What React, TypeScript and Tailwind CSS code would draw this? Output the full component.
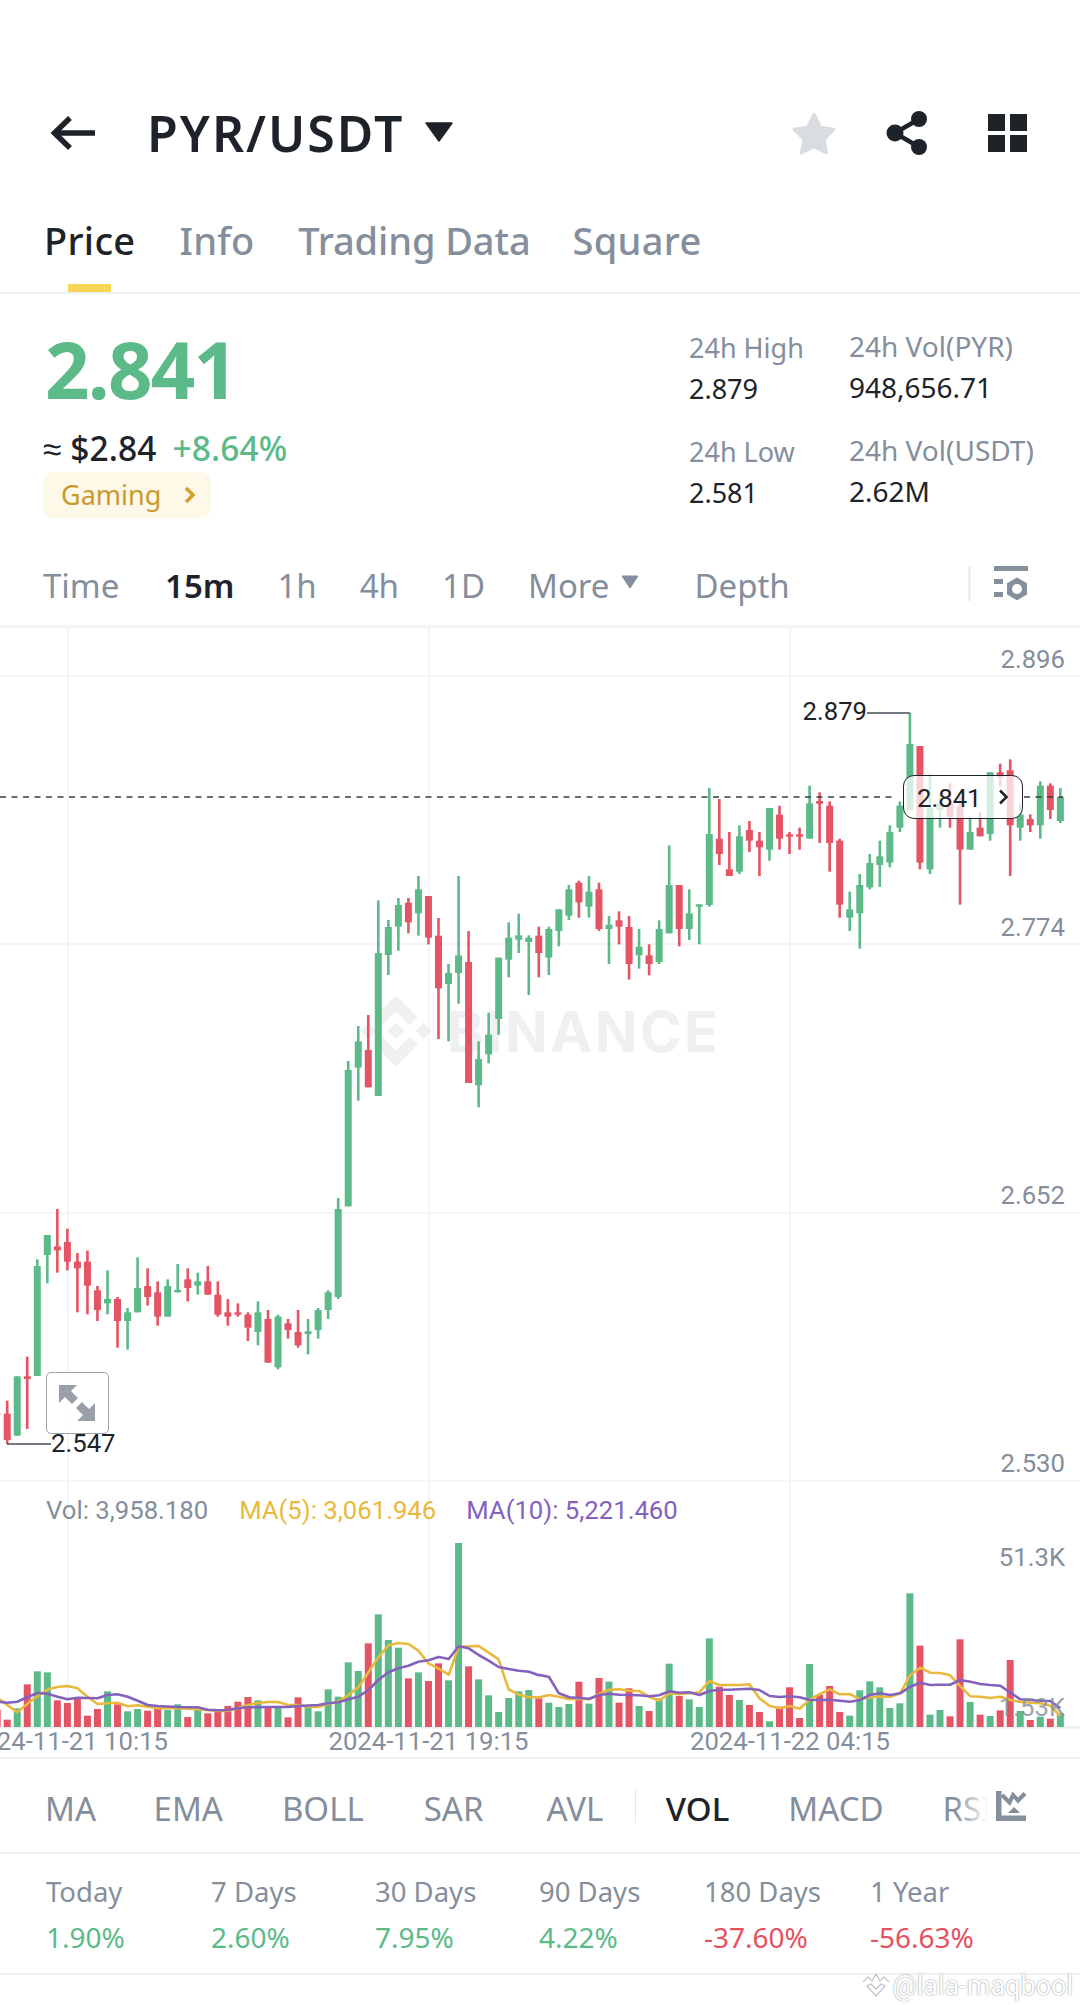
import React from "react";

type C = [string, number, number, number, number];
const A: C[] = [
  ["r",710,880,880,880],["r",842,881,960,972],["g",769,769,947,947],["r",710,769,777,927],["g",418,438,768,768],
  ["g",345,345,405,490],["r",267,379,391,458],["r",326,366,425,451],["r",399,425,445,577],["r",392,425,497,583],
  ["r",498,511,570,603],["g",451,537,550,583],["r",531,537,603,683],["g",564,577,603,689],["g",412,504,577,577],
  ["r",445,498,531,557],["r",484,517,590,617],["g",478,498,590,590],["g",432,510,517,517],["r",445,478,504,544],
  ["g",458,484,497,524],["r",438,484,524,524],["r",484,524,584,590],["r",537,577,590,617],["r",550,577,584,590],
  ["r",577,584,623,663],["g",544,577,636,676],["r",570,597,728,728],["g",584,590,742,748],["r",597,610,630,656],
  ["r",570,636,676,683],["g",597,634,642,703],["g",564,570,630,656],["g",511,517,570,597],["g",234,267,531,537],
];
const B: C[] = [
  ["g",1323,1350,1759,1759],["g",1218,1264,1343,1442],["r",1185,1290,1402,1402],["g",841,999,1428,1428],["g",900,921,1005,1065],
  ["g",834,855,920,992],["r",834,848,907,940],["g",768,808,880,947],["r",828,828,953,973],["r",894,947,1105,1257],
  ["g",1032,1059,1092,1264],["g",768,1006,1059,1151],["r",933,1026,1389,1389],["g",1264,1317,1396,1462],["g",1178,1244,1303,1330],
  ["g",1013,1013,1197,1244],["g",907,953,1019,1072],["g",881,946,959,999],["g",946,953,966,1125],["r",920,947,999,1072],
  ["g",920,927,1013,1065],["g",868,868,933,979],["g",795,808,887,900],["r",782,788,847,893],["g",768,815,860,893],
  ["r",788,808,927,933],["g",888,914,927,1032],["r",874,901,920,973],["r",888,921,1032,1079],["g",927,980,1006,1046],
  ["r",973,1006,1032,1066],["g",901,927,1026,1032],["g",676,795,940,940],["r",795,795,927,979],["g",808,880,927,960],
  ["g",853,853,860,973],["g",504,642,855,860],["r",537,656,702,735],["r",636,748,768,768],["g",616,649,755,762],
  ["r",603,630,662,696],["r",636,662,682,768],["g",564,564,689,722],["r",557,584,656,689],["r",636,643,650,702],
  ["r",623,643,650,689],["g",497,550,656,656],["r",517,543,551,669],["r",544,557,669,755],["r",656,662,854,893],
  ["g",815,868,893,933],["g",762,795,880,986],["g",702,729,802,808],["g",662,709,735,801],["g",616,636,728,742],
  ["g",544,557,623,636],["g",279,372,570,570],["r",378,378,728,748],["g",464,564,748,762],["g",523,550,570,623],
  ["r",490,550,590,623],["r",530,560,689,854],["g",590,636,689,689],["r",577,623,649,649],["g",457,457,642,662],
  ["r",431,457,472,500],["r",418,451,616,768],["g",550,584,623,662],["r",583,597,616,636],["g",484,497,616,656],
  ["r",490,497,570,597],["g",504,531,603,609],
];
const candles = [
  ...A.map((c) => [c[0], c[1] / 3 + 1120, c[2] / 3 + 1120, c[3] / 3 + 1120, c[4] / 3 + 1120] as C),
  ...B.map((c) => [c[0], c[1] / 3 + 620, c[2] / 3 + 620, c[3] / 3 + 620, c[4] / 3 + 620] as C),
];
const vols: [string, number][] = [
  ["r",629],["r",659],["g",625],["r",553],["g",514],["g",517],["r",601],["r",609],["r",593],["r",647],["r",627],["g",574],["r",613],["g",634],["g",627],["r",632],["r",627],["g",630],["g",613],["r",651],["g",628],["r",640],["r",632],["r",618],["r",605],["r",591],["g",601],["r",620],["g",620],["r",652],["r",592],["g",620],["g",634],["g",568],["g",590],
  ["g",487],["g",513],["r",430],["g",343],["g",420],["g",443],["r",535],["g",517],["r",543],["r",490],["g",541],["g",129],["r",499],["g",538],["g",586],["g",636],["g",594],["g",574],["g",570],["r",595],
  ["g",608],["g",621],["g",612],["r",545],["g",611],["r",534],["g",545],["r",608],["r",565],["g",618],["r",633],["g",595],["g",491],["r",588],["g",598],["g",621],["g",415],["r",560],["r",585],["g",600],["r",615],["r",636],["g",664],["r",620],["r",562],["r",654],["g",492],["r",585],["r",558],["r",636],["g",647],["g",571],["g",544],["g",562],["g",624],["g",610],["g",280],["r",437],["g",644],["g",630],["r",649],["r",418],["g",606],["r",644],["g",648],["r",631],["r",480],["g",633],["r",660],["g",650],["r",656],["g",640],
];
const ma5L = [[-3,597],[50,637],[85,607],[114,585],[140,568],[170,560],[196,558],[225,565],[254,590],[283,612],[312,610],[341,608],[371,619],[400,616],[458,625],[516,625],[574,628],[632,633],[661,633],[690,625],[720,615],[749,609],[778,606],[808,606],[837,615],[866,615],[895,620],[924,621],[953,612],[983,605],[1012,585],[1041,561],[1070,517],[1099,472],[1128,436],[1157,429],[1186,432],[1215,452],[1244,490],[1274,506],[1303,524],[1332,440],[1361,439],[1390,438],[1419,458],[1448,478],[1477,568],[1507,584],[1536,592],[1565,592]];
const ma5R = [[0,592],[26,585],[55,590],[85,598],[114,596],[143,598],[172,582],[201,569],[230,568],[259,572],[288,573],[317,590],[346,602],[376,580],[405,583],[434,580],[463,577],[492,543],[521,555],[550,555],[579,555],[608,553],[637,595],[667,618],[696,625],[725,618],[754,626],[784,598],[813,582],[842,568],[871,583],[900,582],[929,598],[958,592],[987,590],[1017,590],[1046,580],[1075,525],[1104,503],[1133,518],[1162,519],[1191,526],[1220,558],[1250,589],[1279,590],[1308,594],[1337,590],[1366,600],[1395,606],[1424,608],[1453,610],[1482,617],[1511,648]];
const ma10L = [[-3,605],[21,608],[50,605],[79,592],[109,579],[138,581],[167,590],[196,598],[225,593],[254,594],[283,595],[312,585],[341,583],[371,590],[400,602],[429,615],[458,618],[516,621],[574,622],[603,629],[632,631],[661,630],[690,625],[720,622],[778,621],[837,621],[866,618],[924,615],[953,610],[983,607],[1012,598],[1041,590],[1070,570],[1099,540],[1128,517],[1157,505],[1186,497],[1215,485],[1244,481],[1274,471],[1303,477],[1332,439],[1361,445],[1390,465],[1419,482],[1448,501],[1477,507],[1507,512],[1536,515],[1565,526]];
const ma10R = [[0,525],[26,531],[55,580],[85,592],[114,594],[143,596],[172,585],[201,581],[230,584],[259,585],[288,586],[317,589],[346,586],[376,574],[405,578],[434,577],[463,585],[492,573],[521,569],[550,569],[579,568],[608,566],[637,570],[667,588],[696,591],[725,589],[754,592],[784,600],[813,600],[842,599],[871,602],[900,605],[929,600],[958,585],[987,580],[1017,585],[1046,580],[1075,560],[1104,548],[1133,555],[1162,554],[1191,554],[1220,540],[1250,545],[1279,552],[1308,555],[1337,557],[1366,578],[1395,598],[1424,600],[1453,602],[1482,603],[1511,625]];
const line = (l: number[][], r: number[][]) =>
  [...l.map(([x, y]) => `${(x / 2.904).toFixed(1)},${(1500 + y / 3).toFixed(1)}`),
   ...r.map(([x, y]) => `${(540 + x / 2.904).toFixed(1)},${(1500 + y / 3).toFixed(1)}`)].join(" ");

const GREEN = "#5cba89";
const RED = "#e45464";
const cx = (k: number) => 7.2 + 10.03 * (k - 1);

function ChartDrawing() {
  return (
    <svg className="absolute left-0 top-0" width="1080" height="1132" viewBox="0 625 1080 1132">
      <g stroke="#f1f2f4" strokeWidth="1.5">
        {[676, 944, 1213, 1481].map((y) => <line key={y} x1="0" x2="1080" y1={y} y2={y} />)}
        {[68, 429, 790].map((x) => <line key={x} x1={x} x2={x} y1="627" y2="1727" />)}
      </g>
      <path
        transform="translate(360.5 995.5) scale(0.56)"
        fill="#eff1f1"
        d="M38.73 53.2l24.59-24.58 24.6 24.6 14.3-14.31L63.32 0 24.42 38.9l14.31 14.3zM0 63.31L14.3 49l14.31 14.31-14.31 14.3zM38.73 73.41l24.59 24.59 24.6-24.6 14.31 14.29-38.9 38.91-38.91-38.88-.02-.02zM98.28 63.31l14.3-14.3 14.31 14.3-14.31 14.31zM77.83 63.3L63.32 48.78 52.59 59.51l-1.24 1.23-2.54 2.54 14.51 14.5L77.83 63.3z"
      />
      <text x="447" y="1052" fill="#eff1f1" fontFamily="Inter, sans-serif" fontWeight="700" fontSize="56" textLength="271" lengthAdjust="spacing">BINANCE</text>
      {candles.map((c, k) => (
        <g key={k} fill={c[0] === "g" ? GREEN : RED}>
          <rect x={cx(k) - 1.3} y={c[1]} width="2.6" height={Math.max(c[4] - c[1], 0)} />
          <rect x={cx(k) - 3.5} y={c[2]} width="7" height={Math.max(c[3] - c[2], 1)} />
        </g>
      ))}
      <line x1="0" x2="892" y1="797" y2="797" stroke="#373c45" strokeWidth="1.5" strokeDasharray="6 5.5" />
      <line x1="1024" x2="1063" y1="797" y2="797" stroke="#373c45" strokeWidth="1.5" strokeDasharray="6 5.5" />
      <polyline points="867,713 910,713" fill="none" stroke="#474d57" strokeWidth="1.5" />
      <polyline points="7,1444 51,1444" fill="none" stroke="#474d57" strokeWidth="1.5" />
      <line x1="0" x2="1080" y1="1727.5" y2="1727.5" stroke="#eaecef" strokeWidth="2" />
      {vols.map(([col, v], k) => (
        <rect key={k} x={cx(k) - 3.5} y={1500 + v / 3} width="7" height={1727 - (1500 + v / 3)} fill={col === "g" ? GREEN : RED} />
      ))}
      <polyline points={line(ma5L, ma5R)} fill="none" stroke="#e9b93e" strokeWidth="2.6" strokeLinejoin="round" />
      <polyline points={line(ma10L, ma10R)} fill="none" stroke="#8561be" strokeWidth="2.6" strokeLinejoin="round" />
    </svg>
  );
}

function PriceLabel({ top, children, extra = "" }: { top: string; children: React.ReactNode; extra?: string }) {
  return <div className={`absolute right-[15px] font-['Roboto',sans-serif] text-[25.7px] leading-[30px] text-[#848e9c] ${top} ${extra}`}>{children}</div>;
}

function Stat({ label, value, red }: { label: string; value: string; red?: boolean }) {
  return (
    <div className="flex flex-col">
      <span className="text-[27.5px] leading-[36px] text-[#848e9c]">{label}</span>
      <span className={`mt-[9px] text-[28px] leading-[36px] ${red ? "text-[#e65160]" : "text-[#5cba89]"}`}>{value}</span>
    </div>
  );
}

function MiniStat({ label, value, width, size }: { label: string; value: string; width: string; size: string }) {
  return (
    <div className={`flex flex-col ${width}`}>
      <span className={`leading-[36px] text-[#848e9c] whitespace-nowrap ${size}`}>{label}</span>
      <span className={`mt-[5px] leading-[36px] text-[#1e2329] whitespace-nowrap ${size}`}>{value}</span>
    </div>
  );
}

export default function App() {
  return (
    <div className="w-[1080px] h-[2005px] overflow-hidden bg-white font-['Noto_Sans',sans-serif] text-[#1e2329]">
      <div className="h-[88px]" />
      {/* header */}
      <div className="h-[90px] flex items-center pl-[51px] pr-[52px]">
        <svg width="44" height="34" viewBox="0 0 44 34" fill="none" stroke="#1e2329" strokeWidth="5.5">
          <path d="M44 17H4" />
          <path d="M19 2L3.5 17 19 32" />
        </svg>
        <span className="ml-[52px] text-[50px] leading-[60px] font-semibold tracking-[2px]">PYR/USDT</span>
        <svg className="ml-[21px] -mt-[3px]" width="28" height="20" viewBox="0 0 28 20">
          <path d="M1 1h26L14 19z" fill="#1e2329" stroke="#1e2329" strokeWidth="1.5" strokeLinejoin="round" />
        </svg>
        <div className="flex-1" />
        <svg className="-ml-[1px]" width="46" height="46" viewBox="0 0 44 44">
          <polygon points="22,4 28,16.5 41,18.5 31.5,28 34,41 22,35 10,41 12.5,28 3,18.5 16,16.5" fill="#d9dce1" stroke="#d9dce1" strokeWidth="3" strokeLinejoin="round" />
        </svg>
        <svg className="ml-[49px]" width="44" height="44" viewBox="0 0 44 44" fill="#1e2329">
          <circle cx="33" cy="8" r="8" />
          <circle cx="9" cy="22" r="8.5" />
          <circle cx="33" cy="36" r="8" />
          <path d="M33 8L9 22l24 14" fill="none" stroke="#1e2329" strokeWidth="4.5" />
        </svg>
        <svg className="ml-[58px]" width="40" height="40" viewBox="0 0 40 40" fill="#1e2329">
          <rect x="0" y="1" width="17" height="17" />
          <rect x="22" y="1" width="17" height="17" />
          <rect x="0" y="22" width="17" height="17" />
          <rect x="22" y="22" width="17" height="17" />
        </svg>
      </div>
      {/* tabs */}
      <div className="h-[116px] flex gap-[44px] pl-[44px] border-b-[2px] border-[#eff0f2]">
        <div className="flex flex-col items-center justify-between pt-[37px]">
          <span className="text-[38px] leading-[50px] font-medium text-[#1e2329] tracking-[0.3px]">Price</span>
          <div className="w-[43px] h-[8px] bg-[#f6d654]" />
        </div>
        <span className="pt-[37px] text-[38px] leading-[50px] font-medium text-[#848e9c] tracking-[0.2px]">Info</span>
        <span className="pt-[37px] text-[38px] leading-[50px] font-medium text-[#848e9c] tracking-[-0.1px]">Trading Data</span>
        <span className="-ml-[2px] pt-[37px] text-[38px] leading-[50px] font-medium text-[#848e9c] tracking-[0.3px]">Square</span>
      </div>
      {/* price summary */}
      <div className="h-[246px] flex pl-[43px]">
        <div className="w-[646px] flex flex-col items-start">
          <span className="ml-[2px] mt-[35px] text-[78px] leading-[80px] font-bold text-[#5cba89] tracking-[-1.8px]">2.841</span>
          <div className="flex items-baseline mt-[19px]">
            <span className="text-[33.5px] leading-[40px] font-medium tracking-[0.1px]">≈ $2.84</span>
            <span className="ml-[16px] text-[33.5px] leading-[40px] font-medium text-[#5cba89] tracking-[0.1px]">+8.64%</span>
          </div>
          <div className="mt-[4px] h-[46px] w-[168px] rounded-[10px] bg-[#fdf8e8] flex items-center pl-[18px]">
            <span className="text-[27px] leading-[36px] text-[#c99a2e]">Gaming</span>
            <svg className="ml-[23px]" width="12" height="18" viewBox="0 0 12 18" fill="none" stroke="#d3a02e" strokeWidth="3.5">
              <path d="M2 2l7 7-7 7" />
            </svg>
          </div>
        </div>
        <div className="flex flex-col pt-[36px]">
          <div className="flex h-[104px]">
            <MiniStat label="24h High" value="2.879" width="w-[160px]" size="text-[27px]" />
            <div className="-mt-[2px]"><MiniStat label="24h Vol(PYR)" value="948,656.71" width="w-[200px]" size="text-[28px]" /></div>
          </div>
          <div className="flex">
            <MiniStat label="24h Low" value="2.581" width="w-[160px]" size="text-[27px]" />
            <div className="-mt-[2px]"><MiniStat label="24h Vol(USDT)" value="2.62M" width="w-[200px]" size="text-[28px]" /></div>
          </div>
        </div>
      </div>
      {/* time row */}
      <div className="h-[85px] flex items-center pl-[43px] pr-[52px] pt-[7px] text-[33px] text-[#848e9c]">
        <div className="flex items-center gap-[43px] leading-[44px]">
          <span className="w-[79px]">Time</span>
          <span className="font-semibold text-[#1e2329]">15m</span>
          <span>1h</span>
          <span>4h</span>
          <span>1D</span>
          <span className="flex items-center">
            More
            <svg className="ml-[12px] -mt-[8px]" width="18" height="14" viewBox="0 0 18 14">
              <path d="M1 1h16L9 13z" fill="#848e9c" stroke="#848e9c" strokeLinejoin="round" />
            </svg>
          </span>
        </div>
        <span className="ml-[55px] leading-[44px]">Depth</span>
        <div className="flex-1" />
        <div className="w-[3px] h-[35px] bg-[#eef0f2] -mt-[6px]" />
        <svg className="ml-[23px] -mt-[6px]" width="34" height="35" viewBox="0 0 34 35" fill="#848e9c">
          <rect x="0" y="0" width="34" height="5" />
          <rect x="0" y="13" width="9" height="5" />
          <rect x="0" y="26" width="9" height="5" />
          <path d="M23 11.5l10 5.7v11.4L23 34.3l-10-5.7V17.2z" />
          <circle cx="23" cy="23" r="5" fill="#fff" />
        </svg>
      </div>
      {/* chart */}
      <div className="relative h-[1132px] w-[1080px] border-t-[3px] border-[#f5f5f5] overflow-hidden box-border">
        <div className="absolute left-0 -top-[3px] w-[1080px] h-[1132px]">
          <ChartDrawing />
          <PriceLabel top="top-[18.5px]">2.896</PriceLabel>
          <PriceLabel top="top-[287px]">2.774</PriceLabel>
          <PriceLabel top="top-[555px]">2.652</PriceLabel>
          <PriceLabel top="top-[823px]">2.530</PriceLabel>
          <PriceLabel top="top-[917px]">51.3K</PriceLabel>
          <PriceLabel top="top-[1067px]" extra="opacity-80">1.53K</PriceLabel>
          <div className="absolute left-[802.5px] top-[71px] font-['Roboto',sans-serif] text-[25.7px] leading-[30px] text-[#1e2329]">2.879</div>
          <div className="absolute left-[51px] top-[803px] font-['Roboto',sans-serif] text-[25.7px] leading-[30px] text-[#1e2329]">2.547</div>
          <div className="absolute left-[903px] top-[150px] w-[120px] h-[44px] rounded-[11px] border-[1.5px] border-[#1e2329] bg-white/75 flex items-center pl-[13px]">
            <span className="font-['Roboto',sans-serif] text-[25.7px] leading-[30px] pt-[1px]">2.841</span>
            <svg className="ml-[16px]" width="11" height="16" viewBox="0 0 11 16" fill="none" stroke="#1e2329" strokeWidth="2.5">
              <path d="M2 1.5l6.5 6.5L2 14.5" />
            </svg>
          </div>
          <div className="absolute left-[46px] top-[747px] w-[63px] h-[62px] rounded-[5px] border-[1.5px] border-[#9ca3af] bg-white/90">
            <svg className="absolute left-[12px] top-[12px]" width="36" height="36" viewBox="0 0 36 36" fill="#9aa0aa">
              <path d="M0 0h18l-6 6 7 7-6 6-7-7-6 6z" />
              <path d="M36 36H18l6-6-7-7 6-6 7 7 6-6z" />
            </svg>
          </div>
          <div className="absolute left-[46px] top-[870px] flex font-['Roboto',sans-serif] text-[25.7px] leading-[30px] whitespace-nowrap">
            <span className="text-[#848e9c]">Vol: 3,958.180</span>
            <span className="ml-[31px] text-[#e9b93e]">MA(5): 3,061.946</span>
            <span className="ml-[30px] text-[#8561be]">MA(10): 5,221.460</span>
          </div>
          <div className="absolute left-[-32px] top-[1100.5px] font-['Roboto',sans-serif] text-[25.7px] leading-[30px] text-[#848e9c] whitespace-nowrap">2024-11-21 10:15</div>
          <div className="absolute left-[328.5px] top-[1100.5px] font-['Roboto',sans-serif] text-[25.7px] leading-[30px] text-[#848e9c] whitespace-nowrap">2024-11-21 19:15</div>
          <div className="absolute left-[690px] top-[1100.5px] font-['Roboto',sans-serif] text-[25.7px] leading-[30px] text-[#848e9c] whitespace-nowrap">2024-11-22 04:15</div>
        </div>
      </div>
      {/* indicators */}
      <div className="relative h-[97px] border-y-[2px] border-[#eff0f2] flex items-center pl-[45px] pt-[6px] text-[33px] leading-[44px] text-[#848e9c] whitespace-nowrap overflow-hidden">
        <div className="flex items-center">
          <span>MA</span>
          <span className="ml-[57.5px]">EMA</span>
          <span className="ml-[59px]">BOLL</span>
          <span className="ml-[60px]">SAR</span>
          <span className="ml-[63px]">AVL</span>
        </div>
        <div className="ml-[31.5px] -mt-[6px] w-[1px] h-[34px] bg-[#e6e8ea]" />
        <div className="ml-[30px] flex items-center gap-[59px]">
          <span className="font-medium text-[#1e2329]">VOL</span>
          <span>MACD</span>
          <span>RSI</span>
        </div>
        <div className="absolute left-[955px] top-0 h-full w-[33px] bg-linear-to-r from-transparent to-white" />
        <div className="absolute left-[988px] top-0 h-full w-[92px] bg-white flex items-center">
          <svg className="ml-[7px]" width="32" height="32" viewBox="0 0 32 32" fill="#848e9c">
            <path d="M1 1h5.5v24.5H31V31H1z" />
            <path d="M7 5l7.5 7.5L18 5l5 5.5L30 3.5" fill="none" stroke="#848e9c" strokeWidth="4" />
            <path d="M19 17l6 6H13z" />
          </svg>
        </div>
      </div>
      {/* stats */}
      <div className="h-[121px] border-b-[2px] border-[#eff0f2] grid grid-cols-[165px_164px_164px_165px_166px_1fr] pl-[46px] pt-[20px]">
        <Stat label="Today" value="1.90%" />
        <Stat label="7 Days" value="2.60%" />
        <Stat label="30 Days" value="7.95%" />
        <Stat label="90 Days" value="4.22%" />
        <Stat label="180 Days" value="-37.60%" red />
        <Stat label="1 Year" value="-56.63%" red />
      </div>
      {/* image watermark */}
      <div className="flex justify-end items-start pr-[7px] -mt-[3px] h-[30px]">
        <svg className="mr-[3px]" width="28" height="26" viewBox="0 0 28 26" fill="none" stroke="#bfc3c9" strokeWidth="1.2">
          <path d="M1 10l5-5 4 4 4-7 4 7 4-4 5 5" />
          <path d="M5 14l9 10 9-10-4-2-5 5-5-5z" />
        </svg>
        <span className="text-[27px] leading-[28px] text-white font-['Roboto',sans-serif] [text-shadow:0_0_1.5px_#6f747c]">@lala-maqbool</span>
      </div>
    </div>
  );
}
